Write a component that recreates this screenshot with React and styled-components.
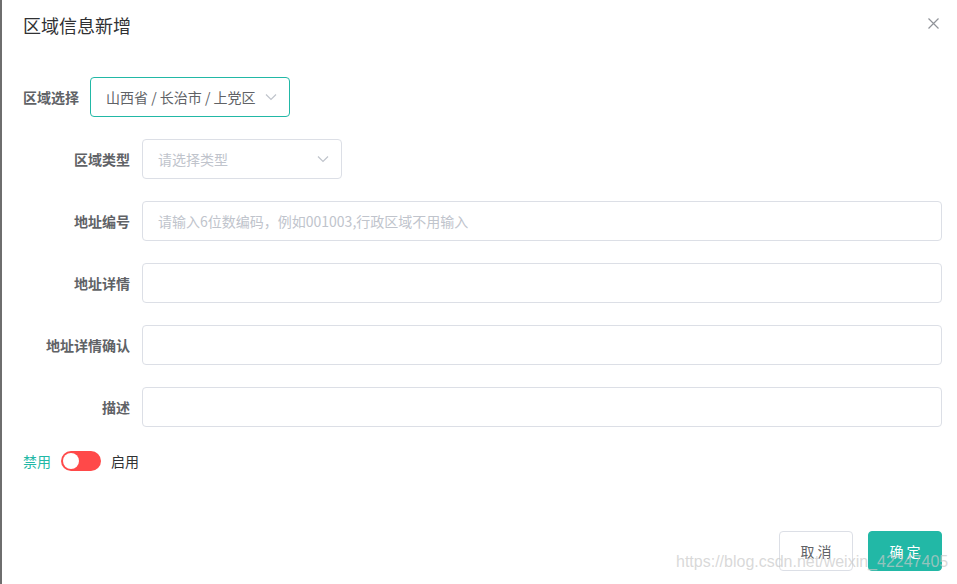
import React from "react";
import styled, { createGlobalStyle } from "styled-components";

const Global = createGlobalStyle`
  html, body { margin: 0; padding: 0; background: #fff; }
  body { font-family: "Noto Sans CJK SC", "Noto Sans", sans-serif; }
  * { box-sizing: border-box; }
`;

const TEAL = "#22b8a6";

const Page = styled.div`
  display: flex;
  width: 957px;
  height: 584px;
  background: #6e6e6e;
  overflow: hidden;
  position: relative;
`;

const Dialog = styled.div`
  margin-left: 2px;
  flex: 1;
  background: #fff;
  display: flex;
  flex-direction: column;
  padding: 13px 15px 0 21px;
`;

const Header = styled.div`
  display: flex;
  align-items: center;
  justify-content: space-between;
  height: 24px;
`;

const Title = styled.span`
  font-size: 18px;
  line-height: 24px;
  color: #303133;
`;

const Close = styled.span`
  display: flex;
  margin-right: 3px;
  margin-top: -3px;
`;

const Form = styled.div`
  display: flex;
  flex-direction: column;
  margin-top: 40px;
`;

const Row = styled.div`
  display: flex;
  align-items: center;
  height: 40px;
  margin-bottom: 22px;
`;

const Label = styled.label`
  font-size: 14px;
  font-weight: 700;
  color: #606266;
  padding-right: ${(p) => (p.$auto ? "11px" : "12px")};
  text-align: right;
  flex-shrink: 0;
  width: ${(p) => (p.$auto ? "auto" : "119px")};
`;

const Field = styled.div`
  display: flex;
  align-items: center;
  justify-content: space-between;
  height: 40px;
  width: ${(p) => (p.$width ? `${p.$width}px` : "auto")};
  flex: ${(p) => (p.$width ? "none" : "1")};
  border: 1px solid ${(p) => (p.$active ? TEAL : "#dcdfe6")};
  border-radius: 4px;
  padding: 0 12px 0 15px;
  font-size: 14px;
  color: ${(p) => (p.$placeholder ? "#c0c4cc" : "#606266")};
  background: #fff;
`;

const Arrow = () => (
  <svg width="12" height="8" viewBox="0 0 12 8">
    <polyline points="1,1.5 6,6.5 11,1.5" fill="none" stroke="#c0c4cc" strokeWidth="1.2" />
  </svg>
);

const SwitchRow = styled.div`
  display: flex;
  align-items: center;
  gap: 10px;
  height: 24px;
  font-size: 14px;
`;

const SwitchText = styled.span`
  color: ${(p) => (p.$active ? TEAL : "#303133")};
`;

const SwitchTrack = styled.span`
  position: relative;
  display: inline-block;
  width: 40px;
  height: 20px;
  border-radius: 10px;
  background: #ff4949;
`;

const Knob = styled.span`
  position: absolute;
  top: 2px;
  left: 2px;
  width: 16px;
  height: 16px;
  border-radius: 50%;
  background: #fff;
`;

const Footer = styled.div`
  display: flex;
  justify-content: flex-end;
  gap: 15px;
  margin-top: 58px;
`;

const Button = styled.button`
  width: 74px;
  height: 40px;
  border-radius: 4px;
  font-family: inherit;
  font-size: 14px;
  border: 1px solid ${(p) => (p.$primary ? TEAL : "#dcdfe6")};
  background: ${(p) => (p.$primary ? TEAL : "#fff")};
  color: ${(p) => (p.$primary ? "#fff" : "#606266")};
  padding: 0;
  white-space: pre;
`;

const Watermark = styled.span`
  position: absolute;
  left: 676px;
  top: 553px;
  font-family: "Liberation Sans", Arial, sans-serif;
  font-size: 16px;
  color: rgba(200, 200, 200, 0.7);
  white-space: nowrap;
  pointer-events: none;
`;

export default function App() {
  return (
    <>
      <Global />
      <Page>
        <Dialog>
          <Header>
            <Title>区域信息新增</Title>
            <Close>
              <svg width="11" height="11" viewBox="0 0 11 11">
                <path d="M0.5 0.5 L10.5 10.5 M10.5 0.5 L0.5 10.5" stroke="#909399" strokeWidth="1.2" />
              </svg>
            </Close>
          </Header>
          <Form>
            <Row>
              <Label $auto>区域选择</Label>
              <Field $width={200} $active>
                <span>山西省 / 长治市 / 上党区</span>
                <Arrow />
              </Field>
            </Row>
            <Row>
              <Label>区域类型</Label>
              <Field $width={200} $placeholder>
                <span>请选择类型</span>
                <Arrow />
              </Field>
            </Row>
            <Row>
              <Label>地址编号</Label>
              <Field $placeholder>
                <span>请输入6位数编码，例如001003,行政区域不用输入</span>
              </Field>
            </Row>
            <Row>
              <Label>地址详情</Label>
              <Field />
            </Row>
            <Row>
              <Label>地址详情确认</Label>
              <Field />
            </Row>
            <Row>
              <Label>描述</Label>
              <Field />
            </Row>
          </Form>
          <SwitchRow>
            <SwitchText $active>禁用</SwitchText>
            <SwitchTrack>
              <Knob />
            </SwitchTrack>
            <SwitchText>启用</SwitchText>
          </SwitchRow>
          <Footer>
            <Button>取 消</Button>
            <Button $primary>确 定</Button>
          </Footer>
        </Dialog>
        <Watermark>https://blog.csdn.net/weixin_42247405</Watermark>
      </Page>
    </>
  );
}
